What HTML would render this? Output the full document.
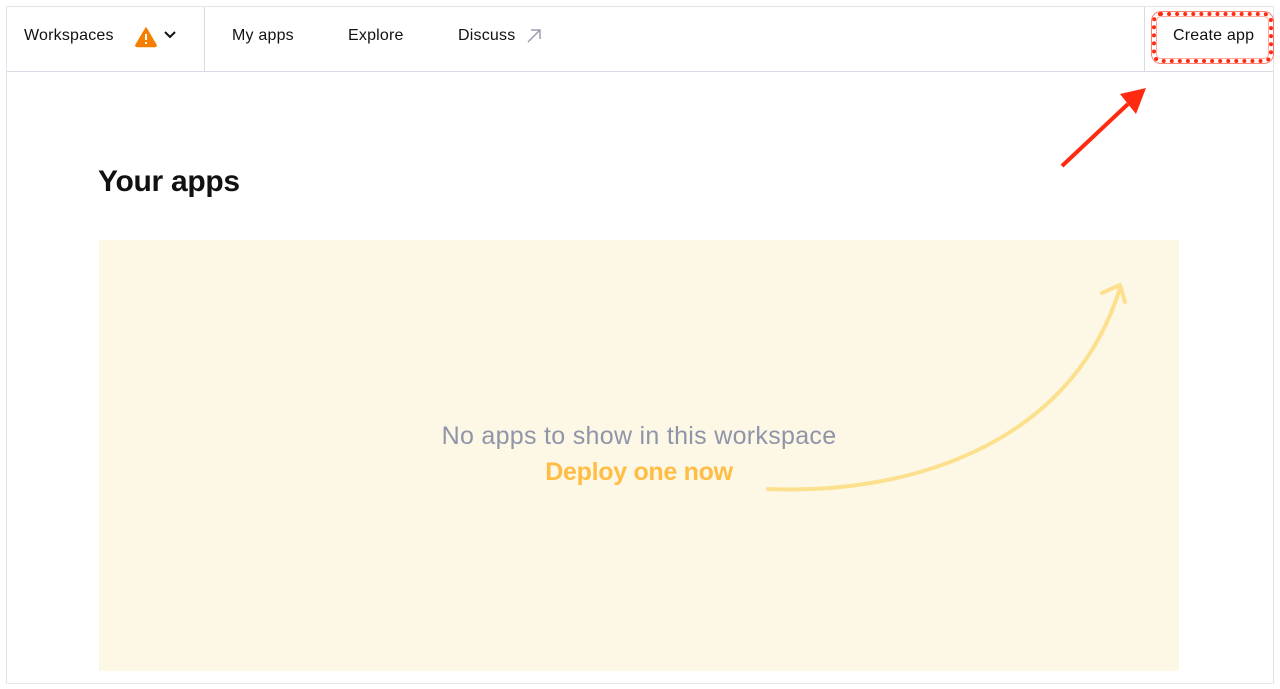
<!DOCTYPE html>
<html><head><meta charset="utf-8"><style>
*{margin:0;padding:0;box-sizing:border-box}
body{width:1280px;height:689px;background:#fff;font-family:"Liberation Sans",sans-serif;position:relative;overflow:hidden}
.frame{position:absolute;left:6px;top:6px;width:1268px;height:678px;border:1px solid #e3e4ea;border-radius:2px}
.hdr{position:absolute;left:7px;top:7px;width:1266px;height:65px;border-bottom:1px solid #dadbe6}
.t{position:absolute;font-size:16px;color:#111;top:27px;letter-spacing:0.2px}
.vl{position:absolute;top:7px;width:1px;height:65px;background:#dadbe6}
</style></head><body>
<div class="frame"></div>
<div class="hdr"></div>
<div class="t" style="left:24px">Workspaces</div>
<svg style="position:absolute;left:134px;top:26px" width="24" height="22" viewBox="0 0 24 22"><path d="M12 2 L22 19 Q22.5 20.5 21 20.5 L3 20.5 Q1.5 20.5 2 19 Z" fill="#f77f00" stroke="#f77f00" stroke-linejoin="round" stroke-width="1.5"/><rect x="11" y="8" width="2" height="6" fill="#fff"/><rect x="11" y="16" width="2" height="2" fill="#fff"/></svg>
<svg style="position:absolute;left:163px;top:30px" width="14" height="10" viewBox="0 0 14 10"><path d="M2 2 L7 7 L12 2" fill="none" stroke="#111" stroke-width="2"/></svg>
<div class="vl" style="left:204px"></div>
<div class="t" style="left:232px">My apps</div>
<div class="t" style="left:348px">Explore</div>
<div class="t" style="left:458px">Discuss</div>
<svg style="position:absolute;left:526px;top:28px" width="16" height="16" viewBox="0 0 16 16"><path d="M2 14 L14 2 M5 2 L14 2 L14 11" fill="none" stroke="#9a9cb0" stroke-width="1.5"/></svg>
<div class="vl" style="left:1144px"></div>
<div class="t" style="left:1173px">Create app</div>
<div style="position:absolute;left:1152px;top:12px;width:121px;height:51px;border:4px dotted #ff2a10;border-radius:9px;box-shadow:0 0 0 1px rgba(255,40,16,.6),inset 0 0 0 1px rgba(255,40,16,.4)"></div>
<svg style="position:absolute;left:0;top:0" width="1280" height="689"><path d="M1062 166 L1128 104" stroke="#ff2a10" stroke-width="4"/><path d="M1120 94 L1146 88 L1136 114 Z" fill="#ff2a10"/></svg>
<div style="position:absolute;left:98px;top:165px;font-size:30px;font-weight:bold;color:#111;letter-spacing:-0.3px">Your apps</div>
<div style="position:absolute;left:99px;top:240px;width:1080px;height:431px;background:#fdf8e6"></div>
<svg style="position:absolute;left:0;top:0" width="1280" height="689"><path d="M768 489 C900 495 1070 450 1120 288 M1102 293 L1120 285 L1125 302" fill="none" stroke="#fde08e" stroke-width="4" stroke-linecap="round" stroke-linejoin="round"/></svg>
<div style="position:absolute;left:289px;width:700px;top:422px;text-align:center;font-size:25px;color:#9094a8;letter-spacing:0.3px">No apps to show in this workspace</div>
<div style="position:absolute;left:289px;width:700px;top:458px;text-align:center;font-size:25px;font-weight:bold;color:#ffbd45;letter-spacing:-0.3px">Deploy one now</div>
</body></html>
